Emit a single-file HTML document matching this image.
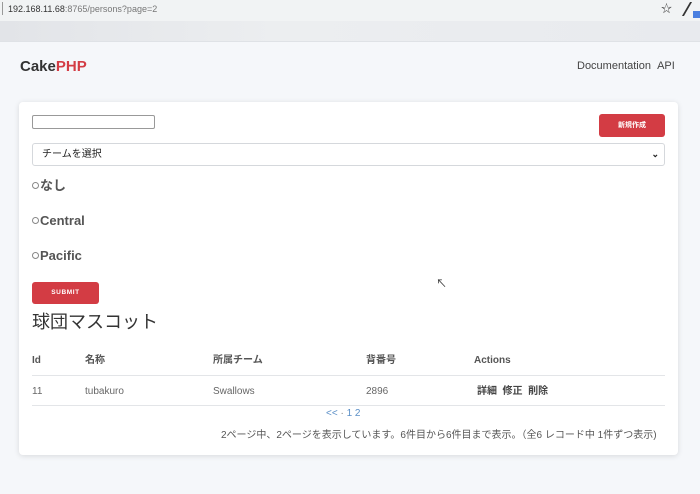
<!DOCTYPE html>
<html><head><meta charset="utf-8"><style>
*{box-sizing:border-box;margin:0;padding:0}
body{width:700px;height:494px;overflow:hidden;background:#f5f7fa;font-family:"Liberation Sans","Noto Sans CJK JP",sans-serif;position:relative;color:#333}
.abs{position:absolute;white-space:nowrap;line-height:1}
.r{display:inline-block;width:7px;height:7px;border:1px solid #888;border-radius:50%;margin-right:1px;vertical-align:1px}
.h{font-size:10px;color:#555;font-weight:bold;top:356px}
.d{font-size:10px;color:#666;top:387px}
</style></head><body>
<div class="abs" style="left:0;top:0;width:700px;height:21px;background:#f1f3f4"></div>
<div class="abs" style="left:2px;top:2px;width:1px;height:13px;background:#999"></div>
<div class="abs" style="left:8px;top:5px;font-size:9px;color:#333">192.168.11.68<span style="color:#777">:8765/persons?page=2</span></div>
<div class="abs" style="left:661px;top:4px;font-size:11px;color:#444">☆</div>
<div class="abs" style="left:686px;top:2px;width:10px;height:14px;border-left:2px solid #333;transform:skewX(-30deg)"></div>
<div class="abs" style="left:693px;top:11px;width:7px;height:7px;background:#4a7fe0"></div>
<div class="abs" style="left:0;top:21px;width:700px;height:20px;background:linear-gradient(90deg,#e2e4e8,#eceef0 40%,#e8eaee)"></div>
<div class="abs" style="left:0;top:41px;width:700px;height:1px;background:#dfe2e6"></div>
<div class="abs" style="left:20px;top:59px;font-size:15px;font-weight:bold;color:#333">Cake<span style="color:#d33c44">PHP</span></div>
<div class="abs" style="left:577px;top:61px;font-size:11px;color:#444">Documentation&nbsp;&nbsp;API</div>
<div class="abs" style="left:19px;top:102px;width:659px;height:353px;background:#fff;border-radius:4px;box-shadow:0 1px 6px rgba(0,0,0,.12)"></div>
<div class="abs" style="left:32px;top:115px;width:123px;height:14px;border:1px solid #999;border-radius:2px"></div>
<div class="abs" style="left:599px;top:114px;width:66px;height:23px;background:#d33c44;border-radius:3px;color:#fff;font-size:7px;font-weight:bold;text-align:center;line-height:23px">新規作成</div>
<div class="abs" style="left:32px;top:143px;width:633px;height:23px;border:1px solid #d5d8dc;border-radius:3px;font-size:10px;line-height:21px;padding-left:9px;color:#222">チームを選択<span style="position:absolute;right:5px;top:0;font-size:9px;font-weight:bold">⌄</span></div>
<div class="abs" style="left:32px;top:179px;font-size:13px;font-weight:bold;color:#555"><span class="r"></span>なし</div>
<div class="abs" style="left:32px;top:214px;font-size:13px;font-weight:bold;color:#555"><span class="r"></span>Central</div>
<div class="abs" style="left:32px;top:249px;font-size:13px;font-weight:bold;color:#555"><span class="r"></span>Pacific</div>
<div class="abs" style="left:32px;top:282px;width:67px;height:22px;background:#d33c44;border-radius:3px;color:#fff;font-size:6.5px;font-weight:bold;letter-spacing:.6px;text-align:center;line-height:22px">SUBMIT</div>
<div class="abs" style="left:32px;top:313px;font-size:18px;color:#333">球団マスコット</div>
<span class="abs h" style="left:32px">Id</span><span class="abs h" style="left:85px">名称</span><span class="abs h" style="left:213px">所属チーム</span><span class="abs h" style="left:366px">背番号</span><span class="abs h" style="left:474px">Actions</span>
<div class="abs" style="left:32px;top:375px;width:633px;height:1px;background:#e3e5e8"></div>
<span class="abs d" style="left:32px">11</span><span class="abs d" style="left:85px">tubakuro</span><span class="abs d" style="left:213px">Swallows</span><span class="abs d" style="left:366px">2896</span><span class="abs d" style="left:477px;color:#444;font-weight:bold">詳細&nbsp;&nbsp;修正&nbsp;&nbsp;削除</span>
<div class="abs" style="left:32px;top:405px;width:633px;height:1px;background:#e3e5e8"></div>
<div class="abs" style="left:326px;top:409px;font-size:10px;color:#5b8fc7">&lt;&lt; <span style="color:#888">·</span> 1 2</div>
<div class="abs" style="left:221px;top:431px;font-size:10px;color:#555">2ページ中、2ページを表示しています。6件目から6件目まで表示。（全6 レコード中 1件ずつ表示)</div>
<div class="abs" style="left:436px;top:279px;font-size:11px;color:#333">↖</div>
</body></html>
